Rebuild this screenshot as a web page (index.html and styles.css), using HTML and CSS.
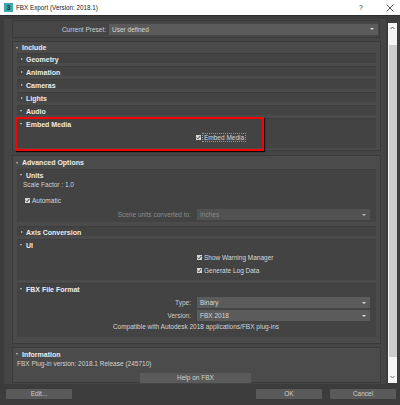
FILE: index.html
```html
<!DOCTYPE html>
<html>
<head>
<meta charset="utf-8">
<link rel="stylesheet" href="styles.css">
</head>
<body>
<div class="titlebar">
  <span class="appicon">3</span>
  <span class="title">FBX Export (Version: 2018.1)</span>
  <span class="help">?</span>
  <svg class="close" width="8" height="8" viewBox="0 0 8 8"><path d="M0.5 0.5L7.5 7.5M7.5 0.5L0.5 7.5" stroke="#444" stroke-width="0.9" fill="none"/></svg>
</div>
<div class="main">
  <div class="scroller">
    <div class="preset">
      <span class="lbl preset-lbl">Current Preset:</span>
      <div class="dd preset-dd"><span>User defined</span><i class="arr"></i></div>
    </div>

    <div class="group include">
      <div class="ghead"><i class="tri down"></i><b>Include</b></div>
      <div class="sub row"><div class="shead"><i class="tri right"></i><b>Geometry</b></div></div>
      <div class="sub row"><div class="shead"><i class="tri right"></i><b>Animation</b></div></div>
      <div class="sub row"><div class="shead"><i class="tri right"></i><b>Cameras</b></div></div>
      <div class="sub row"><div class="shead"><i class="tri right"></i><b>Lights</b></div></div>
      <div class="sub row"><div class="shead"><i class="tri down"></i><b>Audio</b></div></div>
      <div class="sub embed">
        <div class="shead"><i class="tri down"></i><b>Embed Media</b></div>
        <div class="embed-body">
          <span class="cb"><svg width="5" height="5" viewBox="0 0 5 5"><path d="M0.8 2.6L2 3.8L4.2 1" stroke="#333" stroke-width="0.9" fill="none"/></svg></span><span class="cblbl focus">Embed Media</span>
        </div>
        <div class="redbox"></div>
      </div>
    </div>

    <div class="group advanced">
      <div class="ghead adv-head"><i class="tri down"></i><b>Advanced Options</b></div>
      <div class="sub units">
        <div class="shead"><i class="tri down"></i><b>Units</b></div>
        <div class="units-body">
          <div class="txt scale">Scale Factor : 1.0</div>
          <div class="auto"><span class="cb"><svg width="5" height="5" viewBox="0 0 5 5"><path d="M0.8 2.6L2 3.8L4.2 1" stroke="#333" stroke-width="0.9" fill="none"/></svg></span><span class="cblbl">Automatic</span></div>
          <div class="field"><span class="lbl dis">Scene units converted to:</span><div class="dd fdd disabled"><span>Inches</span><i class="arr"></i></div></div>
        </div>
      </div>
      <div class="sub row axis"><div class="shead"><i class="tri right"></i><b>Axis Conversion</b></div></div>
      <div class="sub ui">
        <div class="shead"><i class="tri down"></i><b>UI</b></div>
        <div class="ui-body">
          <div class="cbrow"><span class="cb"><svg width="5" height="5" viewBox="0 0 5 5"><path d="M0.8 2.6L2 3.8L4.2 1" stroke="#333" stroke-width="0.9" fill="none"/></svg></span><span class="cblbl">Show Warning Manager</span></div>
          <div class="cbrow"><span class="cb"><svg width="5" height="5" viewBox="0 0 5 5"><path d="M0.8 2.6L2 3.8L4.2 1" stroke="#333" stroke-width="0.9" fill="none"/></svg></span><span class="cblbl">Generate Log Data</span></div>
        </div>
      </div>
      <div class="sub fbx">
        <div class="shead"><i class="tri down"></i><b>FBX File Format</b></div>
        <div class="fbx-body">
          <div class="field"><span class="lbl">Type:</span><div class="dd fdd"><span>Binary</span><i class="arr"></i></div></div>
          <div class="field"><span class="lbl">Version:</span><div class="dd fdd"><span>FBX 2018</span><i class="arr"></i></div></div>
          <div class="txt compat">Compatible with Autodesk 2018 applications/FBX plug-ins</div>
        </div>
      </div>
    </div>

    <div class="group info">
      <div class="ghead"><i class="tri down"></i><b>Information</b></div>
      <div class="txt ver">FBX Plug-in version: 2018.1 Release (245710)</div>
      <div class="btn helpbtn">Help on FBX</div>
    </div>
  </div>
  <div class="vscroll">
    <svg class="sarrow" width="9" height="8" viewBox="0 0 9 8"><path d="M2.5 5L4.5 3L6.5 5" stroke="#555" stroke-width="0.9" fill="none"/></svg>
    <div class="thumb"></div>
    <svg class="sarrow bottom" width="9" height="8" viewBox="0 0 9 8"><path d="M2.5 3L4.5 5L6.5 3" stroke="#555" stroke-width="0.9" fill="none"/></svg>
  </div>
</div>
<div class="footer">
  <div class="btn editbtn">Edit...</div>
  <div class="spacer"></div>
  <div class="btn okbtn">OK</div>
  <div class="btn cancelbtn">Cancel</div>
</div>
</body>
</html>
```

FILE: styles.css
```css
html, body {
  margin: 0;
  padding: 0;
}
body {
  width: 400px;
  height: 405px;
  overflow: hidden;
  background: #3c3c3c;
  font-family: "Liberation Sans", Arial, sans-serif;
  font-size: 6.5px;
  color: #d2d2d2;
}
b { font-weight: bold; }

.titlebar {
  height: 16px;
  background: #ffffff;
  display: flex;
  align-items: center;
  border-bottom: 1px solid #2e2e2e;
  box-sizing: border-box;
}
.appicon {
  width: 9px;
  height: 9px;
  margin-left: 4px;
  background: #3fa7ae;
  color: #0f3a40;
  font-weight: bold;
  font-size: 7px;
  line-height: 9px;
  text-align: center;
}
.title {
  margin-left: 3px;
  font-size: 6.3px;
  color: #222;
  flex: 1;
}
.help {
  font-size: 7px;
  color: #333;
  margin-right: 23px;
}
.close {
  margin-right: 6px;
}

.main {
  display: flex;
  padding-top: 3px;
  height: 365px;
}
.scroller {
  margin-left: 4px;
  width: 382px;
  height: 365px;
  background: #454545;
  box-sizing: border-box;
  padding: 1px 0 0 8px;
}
.vscroll {
  margin-left: 2px;
  margin-top: 4px;
  width: 9px;
  height: 360px;
  background: #f4f4f4;
  display: flex;
  flex-direction: column;
}
.sarrow { display: block; margin-top: 1px; }
.sarrow.bottom { margin-top: auto; margin-bottom: 2px; }
.thumb {
  margin-top: 13px;
  height: 312px;
  background: #cdcdcd;
  margin-left: 1px;
  width: 8px;
}

/* preset */
.preset {
  width: 368px;
  height: 18px;
  box-sizing: border-box;
  border: 1px solid #3a3a3a;
  background: #464646;
  display: flex;
  align-items: center;
  margin-bottom: 3px;
}
.preset-lbl {
  width: 93px;
  text-align: right;
  margin-right: 3px;
}
.dd {
  background: #5b5b5b;
  height: 11px;
  display: flex;
  align-items: center;
  box-sizing: border-box;
  padding-left: 3px;
  color: #d6d6d6;
  position: relative;
}
.dd span { flex: 1; }
.dd .arr {
  width: 0;
  height: 0;
  border-left: 2px solid transparent;
  border-right: 2px solid transparent;
  border-top: 2.5px solid #e0e0e0;
  margin-right: 4px;
}
.preset-dd { width: 269px; }

.lbl { color: #cfcfcf; }
.dis { color: #8c8c8c; }

/* groups */
.group {
  width: 369px;
  box-sizing: border-box;
  background: #4b4b4b;
  border: 1px solid #3b3b3b;
}
.ghead {
  height: 11px;
  display: flex;
  align-items: center;
  padding-left: 3px;
  color: #ececec;
  font-size: 7px;
}
.tri {
  display: inline-block;
  width: 0;
  height: 0;
  margin-right: 4px;
}
.tri.down {
  border-left: 1.5px solid transparent;
  border-right: 1.5px solid transparent;
  border-top: 2px solid #c8c8c8;
}
.tri.right {
  border-top: 1.5px solid transparent;
  border-bottom: 1.5px solid transparent;
  border-left: 2px solid #c8c8c8;
  margin-left: 1px;
  margin-right: 3px;
}

.include { height: 110px; margin-bottom: 4px; }
.include .ghead { height: 11px; }
.sub {
  margin-left: 4px;
  width: 359px;
  background: #434343;
  box-sizing: border-box;
  border-top: 1px solid #3d3d3d;
  position: relative;
}
.include .sub { margin-bottom: 3px; }
.shead {
  height: 10px;
  display: flex;
  align-items: center;
  padding-left: 3px;
  color: #ececec;
  font-size: 7px;
}
.row { height: 10px; }
.embed { height: 30px; }
.embed-body {
  height: 16px;
  display: flex;
  align-items: center;
  padding-left: 179px;
  box-sizing: border-box;
}
.cb {
  width: 5px;
  height: 5px;
  background: #d6d6d6;
  display: inline-block;
  margin-right: 2px;
  flex: none;
}
.cb svg { display: block; }
.cblbl { color: #d8d8d8; }
.focus {
  outline: 1px dotted #9a9a9a;
  outline-offset: 0;
  padding: 0 1px;
}
.redbox {
  position: absolute;
  left: -2px;
  top: -2px;
  width: 249px;
  height: 34px;
  box-sizing: border-box;
  border: 2px solid #ff0000;
  box-shadow: 1px 1px 1px rgba(0,0,0,0.85);
}

.advanced {
  height: 189px;
  margin-bottom: 3px;
}
.adv-head { height: 13px; }
.units { height: 53px; margin-bottom: 4px; }
.units-body {
  padding-left: 6px;
  display: flex;
  flex-direction: column;
}
.scale { margin-top: 1px; line-height: 7px; }
.auto {
  margin-top: 9px;
  display: flex;
  align-items: center;
  padding-left: 2px;
}
.field {
  display: flex;
  align-items: center;
}
.field .lbl {
  width: 174px;
  text-align: right;
  margin-right: 6px;
}
.units .field { margin-top: 5px; margin-left: -6px; }
.fdd { width: 173px; }
.dd.disabled { background: #525252; color: #8a8a8a; }
.dd.disabled .arr { border-top-color: #bdbdbd; }
.axis { margin-bottom: 3px; }
.ui { height: 41px; margin-bottom: 3px; }
.ui-body {
  padding-left: 180px;
  padding-top: 3px;
}
.cbrow {
  display: flex;
  align-items: center;
  height: 8px;
  margin-bottom: 5px;
}
.fbx { height: 54px; }
.fbx-body { padding-top: 3px; }
.fbx .field { margin-bottom: 2px; }
.compat {
  text-align: center;
  margin-top: 2px;
  padding-right: 1px;
}

.info { height: 36px; }
.info .ghead { height: 12px; }
.ver {
  padding-left: 4px;
  line-height: 8px;
}
.btn {
  background: #5a5a5a;
  color: #cfcfcf;
  height: 10px;
  line-height: 10px;
  text-align: center;
  border-radius: 1px;
  box-sizing: border-box;
}
.helpbtn {
  width: 111px;
  margin-left: 127px;
  margin-top: 5px;
}

.footer {
  display: flex;
  padding: 5px 4px 0 6px;
}
.editbtn { width: 66px; }
.spacer { flex: 1; }
.okbtn { width: 66px; margin-right: 8px; }
.cancelbtn { width: 66px; }
```
